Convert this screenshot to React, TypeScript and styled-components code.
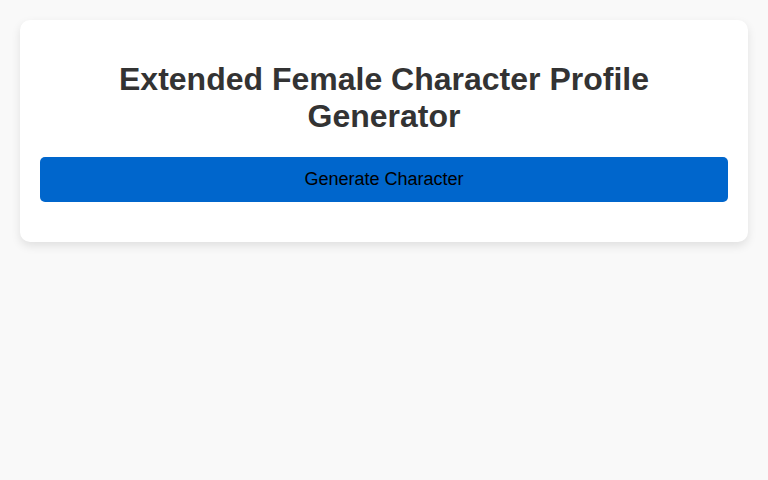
import React from 'react';
import styled, { createGlobalStyle } from 'styled-components';

const GlobalStyle = createGlobalStyle`
  body {
    margin: 0;
    background: #f9f9f9;
    font-family: "Liberation Sans", Arial, sans-serif;
  }
`;

const Page = styled.div`
  padding: 20px;
`;

const Card = styled.div`
  background: #ffffff;
  border-radius: 10px;
  box-shadow: 0 4px 10px rgba(0, 0, 0, 0.1);
  padding: 20px 20px 40px;
`;

const Title = styled.h1`
  margin: 21px 0 22px;
  font-size: 32px;
  font-weight: bold;
  color: #333333;
  text-align: center;
`;

const GenerateButton = styled.button`
  display: block;
  width: 100%;
  padding: 12px;
  border: none;
  border-radius: 5px;
  background: #0066cc;
  color: #000000;
  font-family: "Liberation Sans", Arial, sans-serif;
  font-size: 18px;
  cursor: pointer;
`;

const App: React.FC = () => {
  return (
    <>
      <GlobalStyle />
      <Page>
        <Card>
          <Title>Extended Female Character Profile Generator</Title>
          <GenerateButton>Generate Character</GenerateButton>
        </Card>
      </Page>
    </>
  );
};

export default App;
